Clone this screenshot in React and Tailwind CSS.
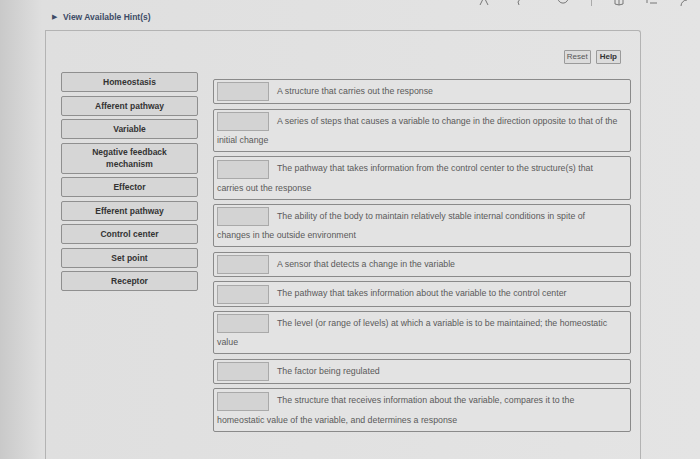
import React from 'react';

const terms = [
  { label: 'Homeostasis' },
  { label: 'Afferent pathway' },
  { label: 'Variable' },
  { label: 'Negative feedback mechanism', tall: true },
  { label: 'Effector' },
  { label: 'Efferent pathway' },
  { label: 'Control center' },
  { label: 'Set point' },
  { label: 'Receptor' },
];

// second item of each pair is the part that wraps onto the next line
const definitions = [
  ['A structure that carries out the response'],
  ['A series of steps that causes a variable to change in the direction opposite to that of the', 'initial change'],
  ['The pathway that takes information from the control center to the structure(s) that', 'carries out the response'],
  ['The ability of the body to maintain relatively stable internal conditions in spite of', 'changes in the outside environment'],
  ['A sensor that detects a change in the variable'],
  ['The pathway that takes information about the variable to the control center'],
  ['The level (or range of levels) at which a variable is to be maintained; the homeostatic', 'value'],
  ['The factor being regulated'],
  ['The structure that receives information about the variable, compares it to the', 'homeostatic value of the variable, and determines a response'],
];

const TopIcons = () => (
  <div className="flex justify-end items-start gap-[22px] pr-[12px] h-[6px] overflow-hidden">
    <svg width="10" height="8" viewBox="0 0 10 8" className="-mt-[3px]" fill="none" stroke="#777" strokeWidth="1">
      <path d="M1 8 L5 0 L9 8" />
    </svg>
    <svg width="10" height="8" viewBox="0 0 10 8" className="-mt-[3px]" fill="none" stroke="#777" strokeWidth="1">
      <path d="M1 2 L4 2 L5 0 L6 2 L9 2 L7 5 L8 8" />
    </svg>
    <svg width="12" height="8" viewBox="0 0 12 8" className="ml-[14px] -mt-[3px]" fill="none" stroke="#777" strokeWidth="1">
      <path d="M1 0 A5 5 0 0 0 11 2" />
    </svg>
    <div className="w-px h-[8px] bg-[#aaa]" />
    <svg width="10" height="8" viewBox="0 0 10 8" className="-mt-[2px]" fill="none" stroke="#777" strokeWidth="1">
      <path d="M1 0 L1 6 L5 7 L9 6 L9 0 M5 0 L5 7" />
    </svg>
    <svg width="12" height="8" viewBox="0 0 12 8" className="-mt-[2px]" fill="none" stroke="#777" strokeWidth="1">
      <path d="M1 0 L1 5 M4 1 L11 1 M4 5 L11 5" />
    </svg>
    <svg width="8" height="8" viewBox="0 0 8 8" fill="none" stroke="#777" strokeWidth="1">
      <path d="M7 0 A6 6 0 0 0 1 6" />
    </svg>
  </div>
);

export default function App() {
  return (
    <div
      className="w-[700px] h-[459px] overflow-hidden bg-[#e2e2e2]"
      style={{ fontFamily: '"Liberation Sans", Arial, sans-serif' }}
    >
      <div className="bg-gradient-to-r from-[#c9c9c9] from-[0%] via-[#dfdfdf] via-[6%] to-[#e4e4e4] h-full">
        <TopIcons />

        <div className="flex items-center gap-[6px] pl-[52px] pt-[2px] h-[20px]">
          <span className="text-[7px] text-[#3d4b66]">▶</span>
          <span className="text-[8.5px] font-bold text-[#3d4b66]">View Available Hint(s)</span>
        </div>

        <div className="ml-[45px] mt-[4px] w-[596px] h-[440px] border-t border-l border-r border-[#b3b3b3] rounded-tr-[3px]">
          <div className="flex justify-end gap-[5px] pr-[19px] pt-[19px]">
            <button className="px-[2px] h-[14px] text-[8px] leading-none text-[#555] bg-[#dcdcdc] border border-[#9a9a9a] rounded-[1px]">
              Reset
            </button>
            <button className="px-[3px] h-[14px] text-[8px] leading-none font-bold text-[#333] bg-[#dcdcdc] border border-[#9a9a9a] rounded-[1px]">
              Help
            </button>
          </div>

          <div className="flex gap-[15px] pl-[15px] pt-[8px]">
            <div className="flex flex-col gap-[3.5px] w-[137px]">
              {terms.map((t) => (
                <div
                  key={t.label}
                  className={`flex items-center justify-center text-center bg-[#d6d6d6] border border-[#8f8f8f] rounded-[2px] text-[8.5px] font-bold text-[#333] leading-[12px] px-[18px] ${
                    t.tall ? 'h-[31px]' : 'h-[20px]'
                  }`}
                >
                  {t.label}
                </div>
              ))}
            </div>

            <div className="flex flex-col gap-[4.5px] w-[418px] pt-[7px]">
              {definitions.map(([first, rest]) => (
                <div
                  key={first}
                  className="border border-[#8a8a8a] rounded-[2px] bg-[#e3e3e3] px-[3px] py-[2px] text-[8.8px] leading-[18px] text-[#5a5a5a]"
                >
                  <span className="inline-block align-middle w-[52px] h-[19px] bg-[#d3d3d3] border border-[#a9a9a9] mr-[8px]" />
                  <span className="whitespace-nowrap">{first}</span>
                  {rest && (
                    <>
                      <br />
                      {rest}
                    </>
                  )}
                </div>
              ))}
            </div>
          </div>
        </div>
      </div>
    </div>
  );
}
